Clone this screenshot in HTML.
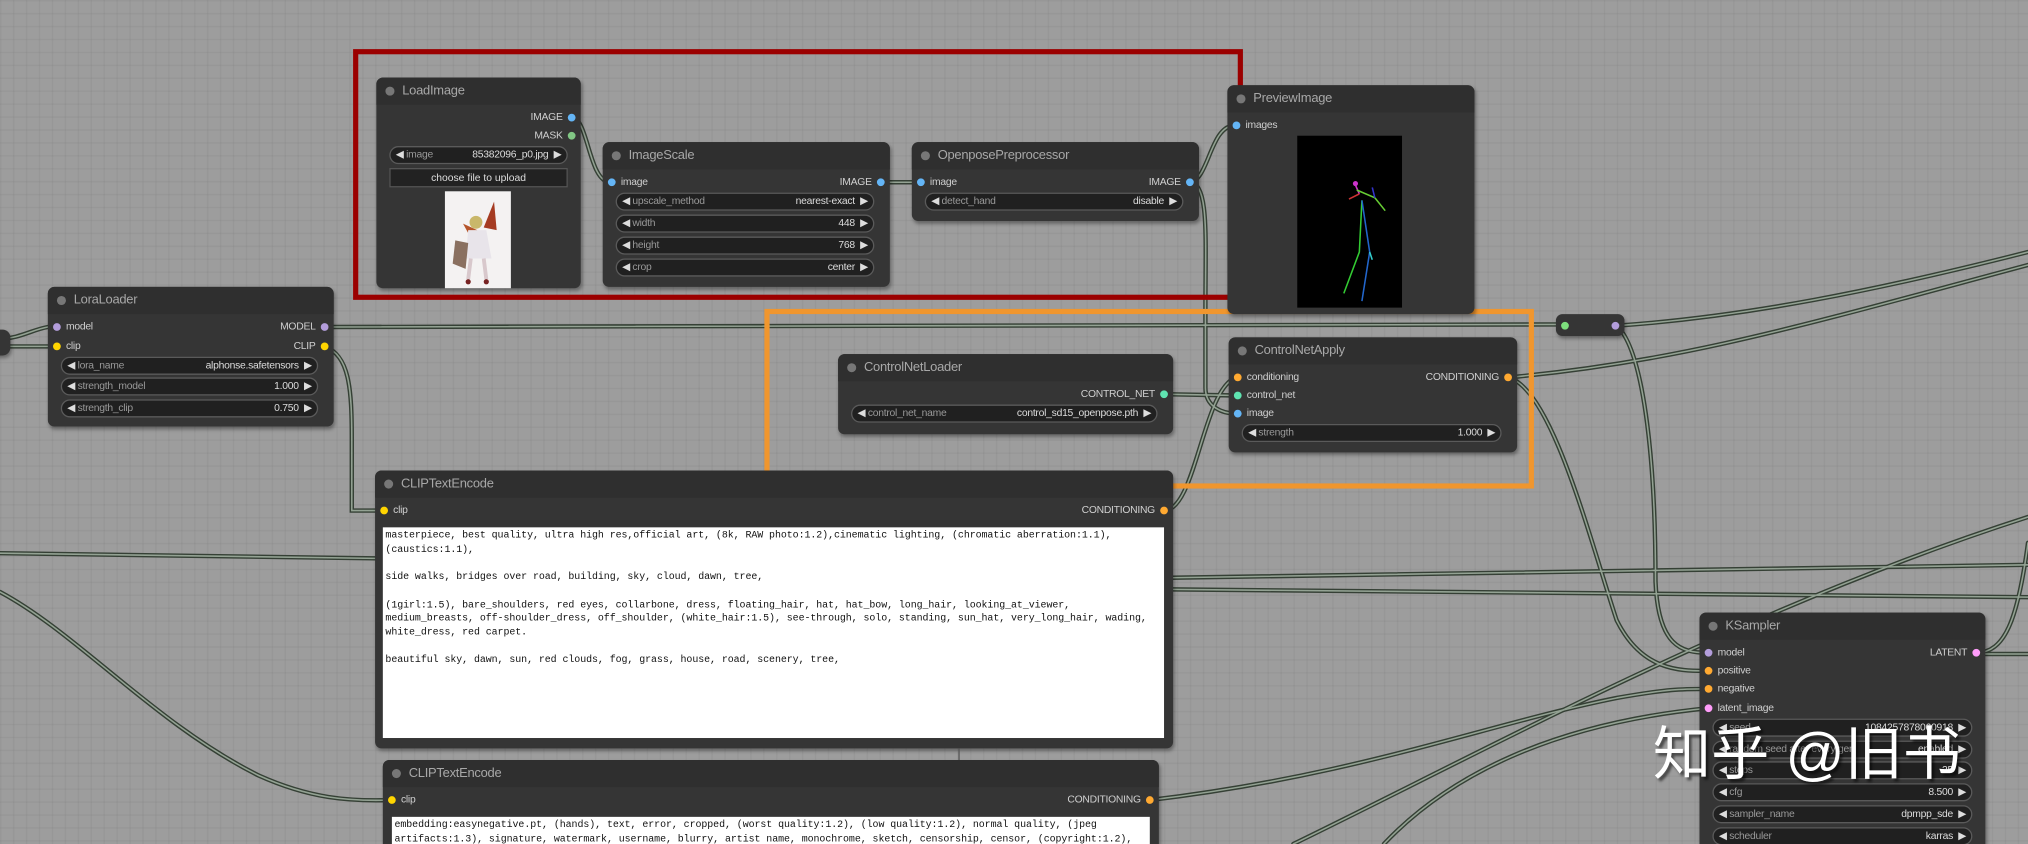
<!DOCTYPE html>
<html><head><meta charset="utf-8"><style>
html,body{margin:0;padding:0;width:2028px;height:844px;overflow:hidden;background:#9d9d9d}
#s{position:absolute;left:0;top:0;width:1568px;height:653px;transform:scale(1.29337,1.2925);transform-origin:0 0;
background-color:#9d9d9d;
background-image:linear-gradient(rgba(0,0,0,.035) 1px,transparent 1px),linear-gradient(90deg,rgba(0,0,0,.035) 1px,transparent 1px);
background-size:10px 10px;font-family:"Liberation Sans",Arial,sans-serif;overflow:hidden}
.n{position:absolute;background:#353535;border-radius:5px;box-shadow:1px 2px 3px rgba(0,0,0,.35)}
.t{position:absolute;left:0;right:0;top:0;height:21px;background:#2f2f2f;border-radius:5px 5px 0 0;color:#a8a8a8;font-size:10px;line-height:21px;padding-left:20px;box-sizing:border-box;letter-spacing:-0.2px}
.t:before{content:"";position:absolute;left:7px;top:7px;width:7px;height:7px;border-radius:50%;background:#777}
.sl{position:absolute;font-size:8px;color:#d0d0d0;line-height:10px;white-space:nowrap;letter-spacing:-0.2px}
.d{position:absolute;width:6px;height:6px;border-radius:50%}
.w{position:absolute;height:12px;border:1px solid #5a5a5a;background:#202020;border-radius:7px;font-size:8px;line-height:12px;color:#999;white-space:nowrap;letter-spacing:-0.2px}
.w .l{position:absolute;left:4px}
.w .v{position:absolute;right:4px;color:#ddd}
.w .a{color:#ddd;font-size:8px}
.ta{position:absolute;background:#fff;font-family:"Liberation Mono",monospace;font-size:7.7px;line-height:10.7px;color:#111;padding:2px 2px;box-sizing:border-box;white-space:pre;overflow:hidden;letter-spacing:-0.05px}
svg{position:absolute;left:0;top:0}
</style></head><body><div id="s">

<svg width="1568" height="653" viewBox="0 0 1568 653">
<defs><g id="wires" fill="none" stroke-linecap="round">
<path d="M0 428 L290 432"/>
<path d="M905 447 C1100 445 1300 440 1568 437"/>
<path d="M905 456 C1100 457 1300 460 1568 462"/>
<path d="M0 458 C60 490 120 560 200 600 C240 618 270 620 302 619"/>
<path d="M251 253 L1210 251"/>
<path d="M251 268 C270 275 272 300 272 340 L272 395 C275 395 285 395 296 395"/>
<path d="M0 262 C15 262 25 255 37 253"/>
<path d="M0 268 C15 268 25 268 43 268"/>
<path d="M442 91 C455 91 455 141 472 141"/>
<path d="M681 141 L712 141"/>
<path d="M919 141 C935 141 935 97 955 97"/>
<path d="M919 141 C935 141 932 180 932 240 L932 300 C932 315 945 320 956 320"/>
<path d="M900 305 L956 306"/>
<path d="M900 395 C925 395 930 300 956 292"/>
<path d="M1166 292 C1300 280 1400 250 1568 205"/>
<path d="M1166 292 C1200 300 1230 420 1250 480 C1270 520 1300 519 1320 519"/>
<path d="M1250 252 C1350 245 1450 225 1568 195"/>
<path d="M1250 252 C1270 270 1280 350 1280 450 C1282 500 1300 505 1320 505"/>
<path d="M889 619 C1050 600 1150 560 1250 540 C1290 533 1300 533 1320 533"/>
<path d="M1070 653 C1120 600 1200 560 1320 548"/>
<path d="M1000 653 C1150 580 1350 470 1568 400"/>
<path d="M1528 505 C1550 505 1560 480 1568 420"/>
<path d="M1528 506 L1568 506"/>
</g></defs>
<use href="#wires" stroke="#354035" stroke-width="3.4"/>
<use href="#wires" stroke="#93a293" stroke-width="1.2"/>
</svg>

<div style="position:absolute;left:273px;top:38px;width:680px;height:186px;border:4px solid #9b0000"></div>
<div style="position:absolute;left:591px;top:239px;width:587px;height:131px;border:4px solid #f0962e"></div>

<div class="n" style="left:291px;top:60px;width:158px;height:163px">
<div class="t">LoadImage</div>
<div class="sl" style="right:14px;top:26px">IMAGE</div><div class="d" style="right:4px;top:28px;background:#64b5f6"></div>
<div class="sl" style="right:14px;top:40px">MASK</div><div class="d" style="right:4px;top:42px;background:#81c784"></div>
<div class="w" style="left:10px;top:53px;width:136px"><span class="l"><span class="a">◀</span> image</span><span class="v">85382096_p0.jpg &nbsp;<span class="a">▶</span></span></div>
<div style="position:absolute;left:10px;top:70px;width:136px;height:13px;background:#222;border:1px solid #555;color:#ddd;font-size:8px;line-height:13px;text-align:center">choose file to upload</div>
<div style="position:absolute;left:53px;top:88px;width:51px;height:75px;background:#f4f2f2">
<svg width="51" height="75" viewBox="0 0 51 75"><path d="M14 25 L25 30 L20 36Z" fill="#b5542a"/><path d="M30 28 L38 8 L40 30Z" fill="#a53b22"/><circle cx="24" cy="24" r="5" fill="#c9b76a"/><path d="M18 30 L32 30 L36 52 L16 52Z" fill="#e8e4ea"/><path d="M8 38 L18 40 L16 60 L6 56Z" fill="#8a7060"/><path d="M20 52 L18 68 M30 52 L32 68" stroke="#d8c8cc" stroke-width="3"/><circle cx="18" cy="70" r="2" fill="#722"/><circle cx="32" cy="70" r="2" fill="#722"/></svg>
</div>
</div>

<div class="n" style="left:466px;top:110px;width:222px;height:112px">
<div class="t">ImageScale</div>
<div class="d" style="left:4px;top:28px;background:#64b5f6"></div><div class="sl" style="left:14px;top:26px">image</div>
<div class="sl" style="right:14px;top:26px">IMAGE</div><div class="d" style="right:4px;top:28px;background:#64b5f6"></div>
<div class="w" style="left:10px;top:39px;width:198px"><span class="l"><span class="a">◀</span> upscale_method</span><span class="v">nearest-exact &nbsp;<span class="a">▶</span></span></div>
<div class="w" style="left:10px;top:56px;width:198px"><span class="l"><span class="a">◀</span> width</span><span class="v">448 &nbsp;<span class="a">▶</span></span></div>
<div class="w" style="left:10px;top:73px;width:198px"><span class="l"><span class="a">◀</span> height</span><span class="v">768 &nbsp;<span class="a">▶</span></span></div>
<div class="w" style="left:10px;top:90px;width:198px"><span class="l"><span class="a">◀</span> crop</span><span class="v">center &nbsp;<span class="a">▶</span></span></div>
</div>

<div class="n" style="left:705px;top:110px;width:222px;height:61px">
<div class="t">OpenposePreprocessor</div>
<div class="d" style="left:4px;top:28px;background:#64b5f6"></div><div class="sl" style="left:14px;top:26px">image</div>
<div class="sl" style="right:14px;top:26px">IMAGE</div><div class="d" style="right:4px;top:28px;background:#64b5f6"></div>
<div class="w" style="left:10px;top:39px;width:198px"><span class="l"><span class="a">◀</span> detect_hand</span><span class="v">disable &nbsp;<span class="a">▶</span></span></div>
</div>

<div class="n" style="left:949px;top:66px;width:191px;height:177px">
<div class="t">PreviewImage</div>
<div class="d" style="left:4px;top:28px;background:#64b5f6"></div><div class="sl" style="left:14px;top:26px">images</div>
<div style="position:absolute;left:54px;top:39px;width:81px;height:133px;background:#000">
<svg width="81" height="133" viewBox="0 0 81 133"><g stroke-width="1.2" fill="none">
<path d="M48 45 L44 36" stroke="#c3c"/><path d="M46 42 L60 48 L68 58" stroke="#6c3"/><path d="M60 48 L58 40" stroke="#33c"/>
<path d="M48 45 L40 49" stroke="#c33"/><path d="M50 50 L48 90 L36 122" stroke="#3c3"/><path d="M50 50 L56 90 L50 128" stroke="#26c"/><path d="M56 90 L58 96" stroke="#3cc"/></g>
<circle cx="45" cy="37" r="2" fill="#c3c"/></svg>
</div>
</div>

<div class="n" style="left:37px;top:222px;width:221px;height:108px">
<div class="t">LoraLoader</div>
<div class="d" style="left:4px;top:28px;background:#b39ddb"></div><div class="sl" style="left:14px;top:26px">model</div>
<div class="d" style="left:4px;top:43px;background:#ffd500"></div><div class="sl" style="left:14px;top:41px">clip</div>
<div class="sl" style="right:14px;top:26px">MODEL</div><div class="d" style="right:4px;top:28px;background:#b39ddb"></div>
<div class="sl" style="right:14px;top:41px">CLIP</div><div class="d" style="right:4px;top:43px;background:#ffd500"></div>
<div class="w" style="left:10px;top:54px;width:197px"><span class="l"><span class="a">◀</span> lora_name</span><span class="v">alphonse.safetensors &nbsp;<span class="a">▶</span></span></div>
<div class="w" style="left:10px;top:70px;width:197px"><span class="l"><span class="a">◀</span> strength_model</span><span class="v">1.000 &nbsp;<span class="a">▶</span></span></div>
<div class="w" style="left:10px;top:87px;width:197px"><span class="l"><span class="a">◀</span> strength_clip</span><span class="v">0.750 &nbsp;<span class="a">▶</span></span></div>
</div>
<div class="n" style="left:-6px;top:255px;width:14px;height:20px;border-radius:6px"></div>

<div class="n" style="left:1203px;top:243px;width:53px;height:17px;border-radius:5px">
<div class="d" style="left:4px;top:6px;background:#7ee07e"></div><div class="d" style="right:4px;top:6px;background:#b39ddb"></div>
</div>

<div class="n" style="left:648px;top:274px;width:259px;height:62px">
<div class="t">ControlNetLoader</div>
<div class="sl" style="right:14px;top:26px">CONTROL_NET</div><div class="d" style="right:4px;top:28px;background:#5fe3b0"></div>
<div class="w" style="left:10px;top:39px;width:235px"><span class="l"><span class="a">◀</span> control_net_name</span><span class="v">control_sd15_openpose.pth &nbsp;<span class="a">▶</span></span></div>
</div>

<div class="n" style="left:950px;top:261px;width:223px;height:89px">
<div class="t">ControlNetApply</div>
<div class="d" style="left:4px;top:28px;background:#ffa931"></div><div class="sl" style="left:14px;top:26px">conditioning</div>
<div class="d" style="left:4px;top:42px;background:#5fe3b0"></div><div class="sl" style="left:14px;top:40px">control_net</div>
<div class="d" style="left:4px;top:56px;background:#64b5f6"></div><div class="sl" style="left:14px;top:54px">image</div>
<div class="sl" style="right:14px;top:26px">CONDITIONING</div><div class="d" style="right:4px;top:28px;background:#ffa931"></div>
<div class="w" style="left:10px;top:67px;width:199px"><span class="l"><span class="a">◀</span> strength</span><span class="v">1.000 &nbsp;<span class="a">▶</span></span></div>
</div>

<div class="n" style="left:290px;top:364px;width:617px;height:215px">
<div class="t">CLIPTextEncode</div>
<div class="d" style="left:4px;top:28px;background:#ffd500"></div><div class="sl" style="left:14px;top:26px">clip</div>
<div class="sl" style="right:14px;top:26px">CONDITIONING</div><div class="d" style="right:4px;top:28px;background:#ffa931"></div>
<div class="ta" style="left:6px;top:44px;width:604px;height:163px">masterpiece, best quality, ultra high res,official art, (8k, RAW photo:1.2),cinematic lighting, (chromatic aberration:1.1),
(caustics:1.1),

side walks, bridges over road, building, sky, cloud, dawn, tree,

(1girl:1.5), bare_shoulders, red eyes, collarbone, dress, floating_hair, hat, hat_bow, long_hair, looking_at_viewer,
medium_breasts, off-shoulder_dress, off_shoulder, (white_hair:1.5), see-through, solo, standing, sun_hat, very_long_hair, wading,
white_dress, red carpet.

beautiful sky, dawn, sun, red clouds, fog, grass, house, road, scenery, tree,</div>
</div>
<div style="position:absolute;left:741px;top:579px;width:1px;height:9px;background:#555"></div>

<div class="n" style="left:296px;top:588px;width:600px;height:80px">
<div class="t">CLIPTextEncode</div>
<div class="d" style="left:4px;top:28px;background:#ffd500"></div><div class="sl" style="left:14px;top:26px">clip</div>
<div class="sl" style="right:14px;top:26px">CONDITIONING</div><div class="d" style="right:4px;top:28px;background:#ffa931"></div>
<div class="ta" style="left:7px;top:44px;width:586px;height:40px">embedding:easynegative.pt, (hands), text, error, cropped, (worst quality:1.2), (low quality:1.2), normal quality, (jpeg
artifacts:1.3), signature, watermark, username, blurry, artist name, monochrome, sketch, censorship, censor, (copyright:1.2),</div>
</div>

<div class="n" style="left:1314px;top:474px;width:221px;height:200px">
<div class="t">KSampler</div>
<div class="d" style="left:4px;top:28px;background:#b39ddb"></div><div class="sl" style="left:14px;top:26px">model</div>
<div class="d" style="left:4px;top:42px;background:#ffa931"></div><div class="sl" style="left:14px;top:40px">positive</div>
<div class="d" style="left:4px;top:56px;background:#ffa931"></div><div class="sl" style="left:14px;top:54px">negative</div>
<div class="d" style="left:4px;top:71px;background:#ff9cf9"></div><div class="sl" style="left:14px;top:69px">latent_image</div>
<div class="sl" style="right:14px;top:26px">LATENT</div><div class="d" style="right:4px;top:28px;background:#ff9cf9"></div>
<div class="w" style="left:10px;top:82px;width:199px"><span class="l"><span class="a">◀</span> seed</span><span class="v">1084257878060918 &nbsp;<span class="a">▶</span></span></div>
<div class="w" style="left:10px;top:99px;width:199px"><span class="l"><span class="a">◀</span> random seed after every gen</span><span class="v">enabled &nbsp;<span class="a">▶</span></span></div>
<div class="w" style="left:10px;top:115px;width:199px"><span class="l"><span class="a">◀</span> steps</span><span class="v">25 &nbsp;<span class="a">▶</span></span></div>
<div class="w" style="left:10px;top:132px;width:199px"><span class="l"><span class="a">◀</span> cfg</span><span class="v">8.500 &nbsp;<span class="a">▶</span></span></div>
<div class="w" style="left:10px;top:149px;width:199px"><span class="l"><span class="a">◀</span> sampler_name</span><span class="v">dpmpp_sde &nbsp;<span class="a">▶</span></span></div>
<div class="w" style="left:10px;top:166px;width:199px"><span class="l"><span class="a">◀</span> scheduler</span><span class="v">karras &nbsp;<span class="a">▶</span></span></div>
</div>

<div style="position:absolute;left:1278px;top:556px;font-family:'Liberation Sans','Noto Sans CJK SC',sans-serif;font-size:45px;line-height:56px;color:#fff;text-shadow:2px 2px 2px rgba(0,0,0,.55);white-space:nowrap">知乎 @旧书</div>

</div></body></html>
